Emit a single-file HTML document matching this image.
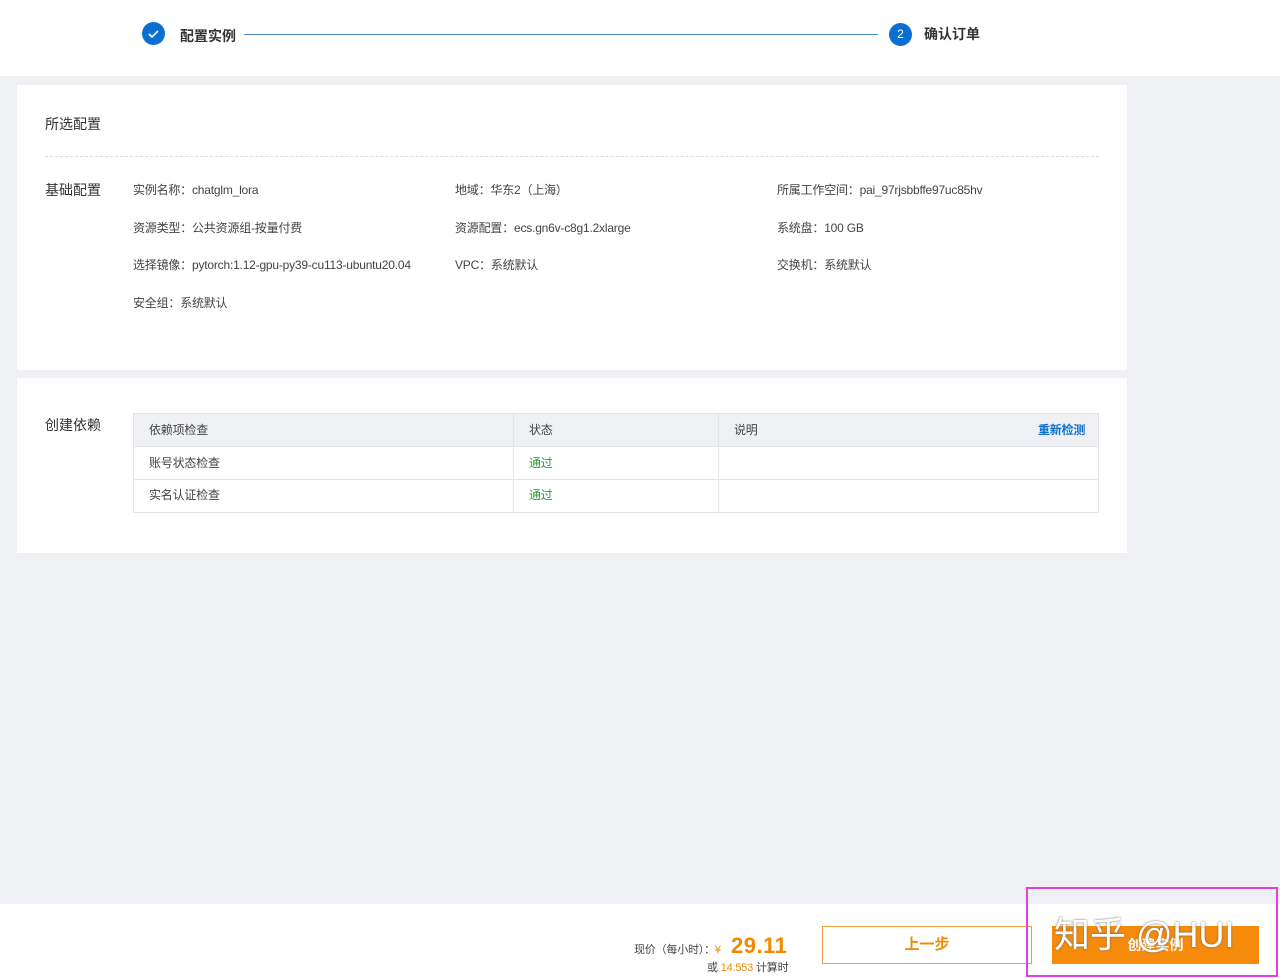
<!DOCTYPE html>
<html><head><meta charset="utf-8"><style>
body{margin:0;width:1280px;height:979px;background:#eff0f3;font-family:"Liberation Sans","Noto Sans CJK SC",sans-serif;color:#333;position:relative;overflow:hidden}
.abs{position:absolute}
.t{font-size:12px;color:#444;letter-spacing:-0.2px}
</style></head><body>
<div class="abs" style="left:0;top:0;width:1280px;height:76px;background:#fff"></div>
<div class="abs" style="left:142px;top:22px;width:23px;height:23px;border-radius:50%;background:#0a6fd0"></div>
<svg class="abs" style="left:142px;top:22px" width="23" height="23"><path d="M7 12l3 3 6-6" stroke="#fff" stroke-width="1.6" fill="none"/></svg>
<div class="abs" style="left:180px;top:26px;font-size:14px;font-weight:bold">配置实例</div>
<div class="abs" style="left:244px;top:34px;width:634px;height:1px;background:#4a8ac0"></div>
<div class="abs" style="left:889px;top:23px;width:23px;height:23px;border-radius:50%;background:#0a6fd0;color:#fff;font-size:12px;text-align:center;line-height:23px">2</div>
<div class="abs" style="left:924px;top:24px;font-size:14px;font-weight:bold">确认订单</div>

<div class="abs" style="left:17px;top:85px;width:1110px;height:285px;background:#fff"></div>
<div class="abs" style="left:45px;top:114px;font-size:14px">所选配置</div>
<div class="abs" style="left:45px;top:156px;width:1054px;border-top:1px dashed #ddd"></div>
<div class="abs" style="left:45px;top:180px;font-size:14px">基础配置</div>
<div class="abs t" style="left:133px;top:181px">实例名称：chatglm_lora</div>
<div class="abs t" style="left:455px;top:181px">地域：华东2（上海）</div>
<div class="abs t" style="left:777px;top:181px">所属工作空间：pai_97rjsbbffe97uc85hv</div>
<div class="abs t" style="left:133px;top:219px">资源类型：公共资源组-按量付费</div>
<div class="abs t" style="left:455px;top:219px">资源配置：ecs.gn6v-c8g1.2xlarge</div>
<div class="abs t" style="left:777px;top:219px">系统盘：100 GB</div>
<div class="abs t" style="left:133px;top:256px">选择镜像：pytorch:1.12-gpu-py39-cu113-ubuntu20.04</div>
<div class="abs t" style="left:455px;top:256px">VPC：系统默认</div>
<div class="abs t" style="left:777px;top:256px">交换机：系统默认</div>
<div class="abs t" style="left:133px;top:294px">安全组：系统默认</div>

<div class="abs" style="left:17px;top:378px;width:1110px;height:175px;background:#fff"></div>
<div class="abs" style="left:45px;top:415px;font-size:14px">创建依赖</div>
<div class="abs" style="left:133px;top:413px;width:964px;height:98px;border:1px solid #e3e5e8"></div>
<div class="abs" style="left:134px;top:414px;width:964px;height:32px;background:#eff1f5"></div>
<div class="abs" style="left:134px;top:446px;width:964px;height:1px;background:#e3e5e8"></div>
<div class="abs" style="left:134px;top:479px;width:964px;height:1px;background:#e3e5e8"></div>
<div class="abs" style="left:513px;top:414px;width:1px;height:98px;background:#e3e5e8"></div>
<div class="abs" style="left:718px;top:414px;width:1px;height:98px;background:#e3e5e8"></div>
<div class="abs t" style="left:149px;top:421px">依赖项检查</div>
<div class="abs t" style="left:529px;top:421px">状态</div>
<div class="abs t" style="left:734px;top:421px">说明</div>
<div class="abs t" style="left:1038px;top:421px;color:#0a6fd0;font-weight:bold">重新检测</div>
<div class="abs t" style="left:149px;top:454px">账号状态检查</div>
<div class="abs t" style="left:529px;top:454px;color:#2e9a3a">通过</div>
<div class="abs t" style="left:149px;top:486px">实名认证检查</div>
<div class="abs t" style="left:529px;top:486px;color:#2e9a3a">通过</div>

<div class="abs" style="left:0;top:904px;width:1280px;height:75px;background:#fff"></div>
<div class="abs t" style="left:634px;top:941px;font-size:11px">现价（每小时）：<span style="color:#f08a00">¥</span></div>
<div class="abs" style="left:731px;top:933px;font-size:22px;font-weight:bold;color:#f08a00;letter-spacing:0.5px">29.11</div>
<div class="abs t" style="left:707px;top:959px;font-size:11px">或 <span style="color:#f08a00">14.553</span> 计算时</div>
<div class="abs" style="left:822px;top:926px;width:208px;height:36px;border:1px solid #f0a040;color:#f08a00;text-align:center;line-height:36px;font-size:15px;font-weight:bold">上一步</div>
<div class="abs" style="left:1052px;top:926px;width:207px;height:38px;background:#f68a0a;color:#fff;text-align:center;line-height:38px;font-size:14px;font-weight:bold">创建实例</div>
<div class="abs" style="left:1054px;top:906px;font-size:36px;color:#fff;text-shadow:0 0 2px #666">知乎 @HUI</div>
<div class="abs" style="left:1026px;top:887px;width:248px;height:86px;border:2px solid #e040e0"></div>
</body></html>
